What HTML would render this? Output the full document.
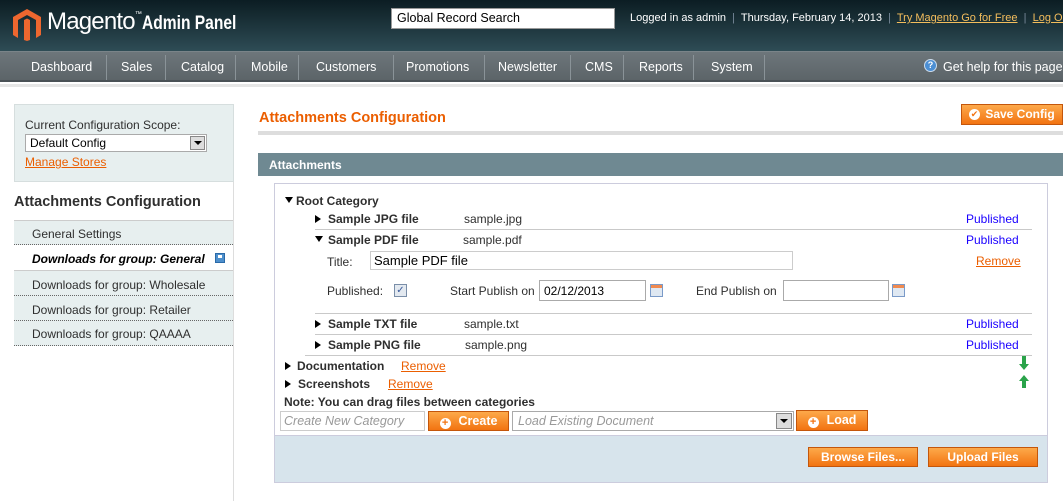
<!DOCTYPE html>
<html><head><style>
*{margin:0;padding:0;box-sizing:border-box}
body{width:1063px;height:501px;overflow:hidden;background:#fff;font-family:"Liberation Sans",Arial,sans-serif;font-size:12px;color:#2f2f2f;position:relative}
.a{position:absolute;white-space:nowrap}
.hdr{left:0;top:0;width:1063px;height:51px;background:linear-gradient(#0c1d23,#2e4c55)}
.nav{left:0;top:51px;width:1063px;height:31px;background:linear-gradient(#6d767b,#5c6468);border-top:1px solid #7a8489;border-bottom:2px solid #4a5156}
.nav span{position:absolute;top:8px;color:#fff;font-size:12.5px}
.sep{position:absolute;top:3px;width:1px;height:25px;background:#8a9398}
.btn{position:absolute;background:linear-gradient(#fda94a,#f27311);border:1px solid #c4560b;color:#fff;font-weight:bold;font-size:12px;text-align:center}
.pl{color:#1a00ff}
.rm{color:#eb5e00;text-decoration:underline}
.b{font-weight:bold}
.line{position:absolute;height:1px;background:#c9c9c9}
.tri{display:inline-block;width:0;height:0;border-top:4px solid transparent;border-bottom:4px solid transparent;border-left:6px solid #000}
.trd{display:inline-block;width:0;height:0;border-left:4px solid transparent;border-right:4px solid transparent;border-top:6px solid #000}
.inp{position:absolute;background:#fff;border:1px solid #aaa}
.dot{position:absolute;left:14px;width:219px;border-bottom:1px dotted #666}
.plus{display:inline-block;width:11px;height:11px;border-radius:50%;background:#fff;color:#f27311;font-size:11px;line-height:11px;text-align:center;vertical-align:-1px;margin-right:8px}
</style></head><body>
<div class="a hdr"></div>
<svg class="a" style="left:13px;top:9px" width="28" height="32" viewBox="0 0 28 32"><path d="M14 0 L28 8 V26 L23 29 V11 L14 6 L5 11 V29 L0 26 V8Z M11 11 L14 9.5 L17 11 V31 L14 32 L11 31Z" fill="#ee672f"/></svg>
<div class="a" style="left:47px;top:8px;color:#fff;font-size:24px;letter-spacing:-0.8px">Magento<span style="font-size:7px;vertical-align:13px">™</span></div>
<div class="a" style="left:142px;top:13px;color:#fff;font-size:19px;font-weight:bold;transform:scaleX(0.82);transform-origin:0 0">Admin Panel</div>
<div class="a" style="left:391px;top:8px;width:224px;height:21px;background:#fff;border:1px solid #999;padding:2px 5px;font-size:12.5px;color:#000">Global Record Search</div>
<div class="a" style="left:630px;top:12px;color:#fff;font-size:11px">Logged in as admin <span style="color:#789">&nbsp;|&nbsp;</span> Thursday, February 14, 2013 <span style="color:#789">&nbsp;|&nbsp;</span> <span style="color:#f3bd5c;text-decoration:underline">Try Magento Go for Free</span> <span style="color:#789">&nbsp;|&nbsp;</span> <span style="color:#f3bd5c;text-decoration:underline">Log Out</span></div>
<div class="a nav">
<span style="left:31px">Dashboard</span><div class="sep" style="left:106px"></div>
<span style="left:121px">Sales</span><div class="sep" style="left:165px"></div>
<span style="left:181px">Catalog</span><div class="sep" style="left:235px"></div>
<span style="left:251px">Mobile</span><div class="sep" style="left:298px"></div>
<span style="left:316px">Customers</span><div class="sep" style="left:393px"></div>
<span style="left:406px">Promotions</span><div class="sep" style="left:484px"></div>
<span style="left:498px">Newsletter</span><div class="sep" style="left:570px"></div>
<span style="left:585px">CMS</span><div class="sep" style="left:623px"></div>
<span style="left:639px">Reports</span><div class="sep" style="left:693px"></div>
<span style="left:711px">System</span><div class="sep" style="left:764px"></div>
<span style="left:924px;top:7px;display:inline-block;width:13px;height:13px;border-radius:50%;background:#4c8fd4;border:1px solid #cde;font-size:9px;text-align:center;line-height:11px;font-weight:bold">?</span>
<span style="left:943px">Get help for this page</span>
</div>
<div class="a" style="left:0;top:84px;width:1063px;height:3px;background:#e6e6e6"></div>

<div class="a" style="left:14px;top:104px;width:220px;height:78px;background:#e7efef;border:1px solid #d6dede"></div>
<div class="a" style="left:25px;top:118px;font-size:12px">Current Configuration Scope:</div>
<div class="inp" style="left:25px;top:134px;width:182px;height:18px;padding:1px 4px;color:#000">Default Config</div>
<div class="a" style="left:190px;top:136px;width:15px;height:14px;background:#ddd;border:1px solid #888"><div class="trd" style="position:absolute;left:3px;top:4px;border-width:4px 4px 0;"></div></div>
<div class="a rm" style="left:25px;top:155px">Manage Stores</div>
<div class="a" style="left:233px;top:182px;width:1px;height:319px;background:#ddd"></div>
<div class="a b" style="left:14px;top:194px;font-size:14.5px">Attachments Configuration</div>
<div class="a" style="left:14px;top:220px;width:219px;height:1px;background:#ccc"></div>
<div class="a" style="left:14px;top:221px;width:219px;height:24px;background:#e7efef"></div>
<div class="dot" style="top:244px"></div>
<div class="a" style="left:32px;top:227px">General Settings</div>
<div class="a b" style="left:32px;top:252px;font-style:italic;color:#000">Downloads for group: General</div>
<div class="a" style="left:215px;top:253px;width:10px;height:10px;background:#4d8fcc;border:1px solid #2a6aa8"><div style="margin:1px 2px;height:3px;background:#fff"></div></div>
<div class="a" style="left:14px;top:270px;width:219px;height:1px;background:#ccc"></div>
<div class="a" style="left:14px;top:271px;width:219px;height:75px;background:#e7efef"></div>
<div class="dot" style="top:295px"></div><div class="dot" style="top:320px"></div><div class="dot" style="top:345px"></div>
<div class="a" style="left:32px;top:278px">Downloads for group: Wholesale</div>
<div class="a" style="left:32px;top:303px">Downloads for group: Retailer</div>
<div class="a" style="left:32px;top:327px">Downloads for group: QAAAA</div>

<div class="a b" style="left:259px;top:110px;font-size:14.5px;color:#eb5e00">Attachments Configuration</div>
<div class="btn" style="left:961px;top:104px;width:102px;height:21px;line-height:19px;padding-left:16px">Save Config</div>
<div class="a" style="left:969px;top:109px;width:11px;height:11px;border-radius:50%;background:#fff;color:#f27311;font-size:9px;line-height:11px;text-align:center">✔</div>
<div class="a" style="left:258px;top:131px;width:805px;height:4px;background:#ddd"></div>
<div class="a" style="left:258px;top:153px;width:805px;height:23px;background:#6f8992"></div>
<div class="a b" style="left:269px;top:158px;color:#fff">Attachments</div>
<div class="a" style="left:274px;top:183px;width:774px;height:300px;background:#d7e4ec;border:1px solid #ccd"></div>
<div class="a" style="left:275px;top:184px;width:772px;height:252px;background:#fff;border-bottom:1px solid #ccd"></div>

<div class="a b" style="left:285px;top:194px"><span class="trd" style="margin-right:3px;vertical-align:2px"></span>Root Category</div>
<div class="a b" style="left:315px;top:212px"><span class="tri" style="margin-right:7px"></span>Sample JPG file</div>
<div class="a" style="left:464px;top:212px">sample.jpg</div><div class="a pl" style="left:966px;top:212px">Published</div>
<div class="line" style="left:315px;top:229px;width:717px"></div>
<div class="a b" style="left:315px;top:233px"><span class="trd" style="margin-right:5px;vertical-align:2px"></span>Sample PDF file</div>
<div class="a" style="left:463px;top:233px">sample.pdf</div><div class="a pl" style="left:966px;top:233px">Published</div>
<div class="a" style="left:327px;top:255px">Title:</div>
<div class="inp" style="left:370px;top:251px;width:423px;height:19px;padding:1px 3px;font-size:13px;color:#000;border-color:#ccc">Sample PDF file</div>
<div class="a rm" style="left:976px;top:254px">Remove</div>
<div class="a" style="left:327px;top:284px">Published:</div>
<div class="a" style="left:394px;top:284px;width:13px;height:13px;border:1px solid #7a8ea8;background:#e3e9f0;font-size:10px;line-height:11px;text-align:center;color:#3a5a9a">✓</div>
<div class="a" style="left:450px;top:284px">Start Publish on</div>
<div class="inp" style="left:539px;top:280px;width:107px;height:21px;padding:3px 4px;color:#000">02/12/2013</div>
<div class="a" style="left:650px;top:284px;width:13px;height:13px;border:1px solid #7a9ac8;background:linear-gradient(#f08a50 0 3px,#dfe8f2 3px)"></div>
<div class="a" style="left:696px;top:284px">End Publish on</div>
<div class="inp" style="left:783px;top:280px;width:106px;height:21px"></div>
<div class="a" style="left:892px;top:284px;width:13px;height:13px;border:1px solid #7a9ac8;background:linear-gradient(#f08a50 0 3px,#dfe8f2 3px)"></div>
<div class="line" style="left:315px;top:313px;width:717px"></div>
<div class="a b" style="left:315px;top:317px"><span class="tri" style="margin-right:7px"></span>Sample TXT file</div>
<div class="a" style="left:464px;top:317px">sample.txt</div><div class="a pl" style="left:966px;top:317px">Published</div>
<div class="line" style="left:315px;top:334px;width:717px"></div>
<div class="a b" style="left:315px;top:338px"><span class="tri" style="margin-right:7px"></span>Sample PNG file</div>
<div class="a" style="left:465px;top:338px">sample.png</div><div class="a pl" style="left:966px;top:338px">Published</div>
<div class="line" style="left:305px;top:355px;width:727px"></div>
<div class="a b" style="left:285px;top:359px"><span class="tri" style="margin-right:6px"></span>Documentation</div>
<div class="a rm" style="left:401px;top:359px">Remove</div>
<div class="a b" style="left:285px;top:377px"><span class="tri" style="margin-right:7px"></span>Screenshots</div>
<div class="a rm" style="left:388px;top:377px">Remove</div>
<svg class="a" style="left:1019px;top:356px" width="10" height="32"><path d="M3 0h4v8h3l-5 6-5-6h3z M5 19l5 6h-3v7h-4v-7h-3z" fill="#2aa34a"/></svg>
<div class="a b" style="left:284px;top:395px">Note: You can drag files between categories</div>
<div class="inp" style="left:280px;top:411px;width:145px;height:20px;padding:2px 3px;color:#999;font-style:italic;font-size:12.5px;border-color:#ccc">Create New Category</div>
<div class="btn" style="left:428px;top:411px;width:81px;height:20px;line-height:18px;font-size:12.5px"><span class="plus">+</span>Create</div>
<div class="inp" style="left:512px;top:411px;width:282px;height:20px;padding:2px 5px;color:#999;font-style:italic;font-size:12.5px">Load Existing Document</div>
<div class="a" style="left:776px;top:413px;width:16px;height:16px;background:#ddd;border:1px solid #888"><div class="trd" style="position:absolute;left:3px;top:5px;border-width:4px 4px 0;"></div></div>
<div class="btn" style="left:796px;top:410px;width:72px;height:21px;line-height:19px;font-size:12.5px"><span class="plus">+</span>Load</div>
<div class="btn" style="left:808px;top:447px;width:110px;height:20px;line-height:18px">Browse Files...</div>
<div class="btn" style="left:928px;top:447px;width:110px;height:20px;line-height:18px">Upload Files</div>
</body></html>
